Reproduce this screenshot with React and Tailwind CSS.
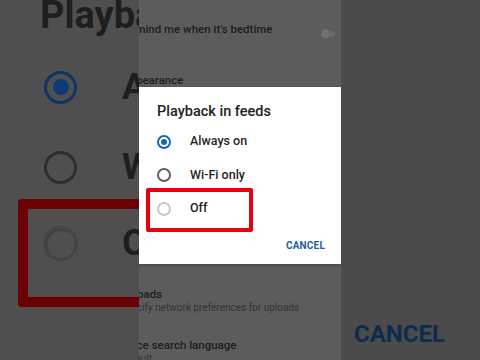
import React from 'react';

const font = { fontFamily: 'Roboto, "Liberation Sans", sans-serif' };

const Radio = ({ checked, muted }) => (
    <div
        className={`w-[14px] h-[14px] rounded-full border-2 flex items-center justify-center shrink-0 ${
            checked ? 'border-[#1565c0]' : muted ? 'border-[#c8c8c8]' : 'border-[#5f5f5f]'
        }`}
    >
        {checked && <div className="w-[6px] h-[6px] rounded-full bg-[#1565c0]" />}
    </div>
);

const options = [
    { label: 'Always on', checked: true },
    { label: 'Wi-Fi only' },
    { label: 'Off', muted: true },
];

const App = () => {
    return (
        <div className="flex w-[480px] h-[360px] overflow-hidden" style={font}>
            {/* left: blown-up blurred copy */}
            <div className="w-[139px] shrink-0 flex flex-col overflow-hidden bg-[#4f4f4f] whitespace-nowrap">
                <div className="h-[47px] pl-[40px] text-[38px] leading-[30px] font-bold text-[#1e1e1e]">Playback</div>
                <div className="h-[80px] flex items-center pl-[44px]">
                    <div className="w-[33px] h-[33px] rounded-full border-[3px] border-[#0e3563] flex items-center justify-center shrink-0">
                        <div className="w-[16px] h-[16px] rounded-full bg-[#0c3a72]" />
                    </div>
                    <span className="ml-[45px] text-[36px] font-bold text-[#1e1e1e]">Always on</span>
                </div>
                <div className="h-[72px] flex items-start pt-[24px] pl-[44px]">
                    <div className="w-[33px] h-[33px] rounded-full border-[3px] border-[#2e2e2e] shrink-0" />
                    <span className="ml-[45px] text-[36px] leading-[33px] font-bold text-[#1e1e1e]">Wi-Fi only</span>
                </div>
                <div className="ml-[18px] w-[140px] h-[108px] shrink-0 border-[10px] border-r-0 border-[#6b0000] rounded-l-[4px] flex items-start pt-[17px] pl-[15px]">
                    <div className="w-[35px] h-[35px] rounded-full border-[3px] border-[#444] shadow-[inset_1px_1px_2px_rgba(0,0,0,0.3)] shrink-0" />
                    <span className="ml-[44px] text-[36px] leading-[35px] font-bold text-[#1e1e1e]">Off</span>
                </div>
            </div>

            {/* center: phone screen */}
            <div className="relative w-[202px] shrink-0 flex flex-col overflow-hidden bg-[#5c5c5c] whitespace-nowrap">
                <div className="h-[87px] shrink-0 flex flex-col ml-[-17px]">
                    <div className="flex items-center justify-between pt-[21px] pr-[6px]">
                        <span className="text-[11.5px] font-medium text-[#1c1c1c]">Remind me when it's bedtime</span>
                        <div className="relative w-[12px] h-[6px] rounded-full bg-[#6a6a6a] mt-[8px]">
                            <div className="absolute -left-[2px] -top-[2px] w-[9px] h-[9px] rounded-full bg-[#707070]" />
                        </div>
                    </div>
                    <span className="mt-[35px] text-[11.5px] leading-[14px] font-medium text-[#1c1c1c]">Appearance</span>
                </div>

                <div className="relative h-[177px] shrink-0 bg-white flex flex-col shadow-[0_1px_3px_rgba(0,0,0,0.3)]">
                    <div className="pl-[18px] pt-[15px] h-[38px] text-[14.5px] leading-[20px] font-medium text-[#212121]">
                        Playback in feeds
                    </div>
                    {options.map((o) => (
                        <div key={o.label} className="h-[33.5px] flex items-center pl-[18px]">
                            <Radio checked={o.checked} muted={o.muted} />
                            <span className="ml-[19px] text-[12.5px] font-medium text-[#1f1f1f]">{o.label}</span>
                        </div>
                    ))}
                    <div className="flex justify-end pr-[16px] pt-[12px]">
                        <span className="text-[10px] font-bold tracking-[0.2px] text-[#1f5f9f]">CANCEL</span>
                    </div>
                    <div className="absolute left-[7px] top-[101px] w-[107px] h-[44px] border-4 border-[#e8000b] rounded-[2px]" />
                </div>

                <div className="flex flex-col ml-[-19px]">
                    <span className="mt-[23px] text-[11.5px] leading-[14px] font-medium text-[#1c1c1c]">Uploads</span>
                    <span className="text-[10px] leading-[13px] text-[#333]">Specify network preferences for uploads</span>
                    <span className="mt-[24px] text-[11.5px] leading-[14px] font-medium text-[#1c1c1c]">Voice search language</span>
                    <span className="text-[10px] leading-[13px] text-[#333]">Default</span>
                </div>
            </div>

            {/* right: blown-up blurred copy */}
            <div className="flex-1 flex flex-col justify-end bg-[#4b4b4b] pl-[13px] pb-[12px]">
                <span className="text-[24px] leading-[28px] font-bold text-[#0f2c4c]">CANCEL</span>
            </div>
        </div>
    );
};

export default App;
